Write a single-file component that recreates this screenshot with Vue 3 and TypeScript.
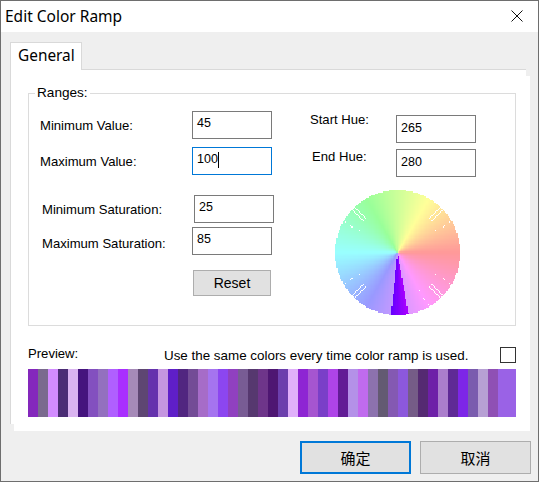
<script setup lang="ts">
import { onMounted, ref } from 'vue'

const stripes: string[] = [
  '#8428bc', '#7a6a8e', '#d28cff', '#4b2d75', '#dab4f0', '#45147e', '#8350bf', '#9370bf',
  '#b05fff', '#a92fff', '#a68ab8', '#5e4672', '#6532ad', '#c596e0', '#5f1fc8', '#512680',
  '#734c96', '#a66cc8', '#a574ef', '#8c46f0', '#9040c0', '#785c94', '#56386f', '#6e358a',
  '#4e1672', '#6c3fad', '#e0b0fa', '#8e25d3', '#a655d0', '#7a3fc8', '#ae44e8', '#621c96',
  '#b491e8', '#c06bee', '#8c72ae', '#635a72', '#8459b2', '#8c58dc', '#755c87', '#552a72',
  '#6e20a8', '#ab7ecc', '#5f2a96', '#7d26e8', '#7a5cae', '#b7a0d4', '#8f50b4', '#9a62e6',
]

const wheel = ref<HTMLCanvasElement | null>(null)

function hsv(h: number, s: number, v: number): [number, number, number] {
  const c = v * s
  const x = c * (1 - Math.abs(((h / 60) % 2) - 1))
  const m = v - c
  const t = Math.floor(h / 60) % 6
  const rgb = [
    [c, x, 0], [x, c, 0], [0, c, x], [0, x, c], [x, 0, c], [c, 0, x],
  ][t]
  return [(rgb[0] + m) * 255, (rgb[1] + m) * 255, (rgb[2] + m) * 255]
}

onMounted(() => {
  const cv = wheel.value
  if (!cv) return
  const ctx = cv.getContext('2d')
  if (!ctx) return
  const size = 100
  const img = ctx.createImageData(size, size)
  for (let y = 0; y < size; y++) {
    for (let x = 0; x < size; x++) {
      const dx = x + 0.5 - 50
      const dy = y + 0.5 - 50
      if (dx * dx + dy * dy > 2500) continue
      let hue = (Math.atan2(-dy, dx) * 180) / Math.PI
      if (hue < 0) hue += 360
      const inRange = hue >= 264 && hue <= 280
      const [r, g, b] = inRange ? hsv(hue, 1, 1) : hsv(hue, 0.4, 1)
      const i = (y * size + x) * 4
      img.data[i] = r
      img.data[i + 1] = g
      img.data[i + 2] = b
      img.data[i + 3] = 255
    }
  }
  ctx.putImageData(img, 0, 0)

  ctx.fillStyle = '#fff'
  const dot = (x: number, y: number) => ctx.fillRect(50 + x, 50 + y, 1, 1)
  for (const [sx, sy] of [[-1, -1], [1, -1], [-1, 1], [1, 1]]) {
    const ox = sx < 0 ? -1 : 0
    const oy = sy < 0 ? -1 : 0
    for (let i = 0; i < 10; i++) {
      dot(ox + sx * (36 - i), oy + sy * (34 - i))
      dot(ox + sx * (34 - i), oy + sy * (36 - i))
    }
    for (const [a, b] of [[41, 24], [37, 21], [36, 20], [30, 17]]) {
      dot(ox + sx * a, oy + sy * b)
      if (sx > 0 && sy > 0) dot(ox + sx * b, oy + sy * a)
    }
  }
})
</script>

<template>
  <div class="window">
    <header class="titlebar">
      <span class="title">Edit Color Ramp</span>
      <svg class="close" width="12" height="12" viewBox="0 0 12 12" aria-label="Close">
        <path d="M0.5 0.5L11.5 11.5M11.5 0.5L0.5 11.5" stroke="#111" stroke-width="1" fill="none" />
      </svg>
    </header>

    <div class="tabs"><div class="tab">General</div></div>

    <section class="pane">
      <div class="group">
        <span class="legend">Ranges:</span>

        <div class="left">
          <div class="row">
            <span class="label">Minimum Value:</span>
            <div class="field">45</div>
          </div>
          <div class="row row-2">
            <span class="label">Maximum Value:</span>
            <div class="field focused">100<i class="caret"></i></div>
          </div>
          <div class="row row-3">
            <span class="label sat">Minimum Saturation:</span>
            <div class="field">25</div>
          </div>
          <div class="row row-4">
            <span class="label sat2">Maximum Saturation:</span>
            <div class="field">85</div>
          </div>
          <button class="reset" type="button">Reset</button>
        </div>

        <div class="right">
          <div class="hue-row">
            <span class="hue-label start">Start Hue:</span>
            <div class="field hue">265</div>
          </div>
          <div class="hue-row second">
            <span class="hue-label end">End Hue:</span>
            <div class="field hue">280</div>
          </div>
          <canvas ref="wheel" class="wheel" width="100" height="100"></canvas>
        </div>
      </div>

      <div class="preview-head">
        <span class="preview-label">Preview:</span>
        <span class="same">Use the same colors every time color ramp is used.</span>
        <span class="check"></span>
      </div>

      <div class="strip">
        <span
          v-for="(c, i) in stripes"
          :key="i"
          class="stripe"
          :style="{ background: c }"
        ></span>
      </div>
    </section>

    <footer class="footer">
      <button class="btn primary" type="button">确定</button>
      <button class="btn" type="button">取消</button>
    </footer>
  </div>
</template>

<style scoped>
.window {
  box-sizing: border-box;
  width: 539px;
  height: 482px;
  border: 1px solid #6e6e6e;
  background: #efefef;
  font-family: "Liberation Sans", Arial, sans-serif;
  font-size: 13.1px;
  color: #000;
  overflow: hidden;
}
.titlebar {
  height: 31px;
  background: #fff;
  display: flex;
  align-items: center;
  justify-content: space-between;
  padding: 0 15px 1px 4px;
  box-sizing: border-box;
}
.title {
  font-family: "Noto Sans", sans-serif;
  font-size: 15.5px;
  color: #000;
}
.tabs {
  padding: 10px 0 0 9px;
  height: 37px;
  box-sizing: border-box;
  display: flex;
  position: relative;
  z-index: 1;
}
.tab {
  box-sizing: border-box;
  width: 72px;
  height: 28px;
  background: #fff;
  border: 1px solid #d9d9d9;
  border-bottom: 0;
  font-family: "Noto Sans", sans-serif;
  font-size: 15.4px;
  line-height: 25px;
  padding-left: 7px;
}
.pane {
  box-sizing: border-box;
  width: 516px;
  height: 355px;
  margin-left: 9px;
  background: #fff;
  border-top: 1px solid #d9d9d9;
  border-left: 1px solid #d9d9d9;
  box-shadow: 4px 7px 0 #fff;
  padding: 23px 0 0 17px;
  position: relative;
}
.group {
  position: relative;
  box-sizing: border-box;
  width: 488px;
  height: 233px;
  border: 1px solid #dcdcdc;
  display: flex;
}
.legend {
  position: absolute;
  left: 6px;
  top: -9px;
  background: #fff;
  padding: 0 2px;
  line-height: 16px;
  font-size: 13.6px;
}
.left {
  width: 281px;
  padding: 17px 0 0 11px;
  box-sizing: border-box;
}
.row {
  display: flex;
  height: 28px;
}
.row-2 { margin-top: 8px; }
.row-3 { margin-top: 20px; }
.row-4 { margin-top: 4px; }
.label {
  width: 152px;
  line-height: 30px;
}
.label.sat {
  margin-left: 2px;
}
.label.sat2 {
  margin-left: 2px;
  width: 150px;
  line-height: 34px;
}
.field {
  box-sizing: border-box;
  width: 80px;
  height: 28px;
  border: 1px solid #7a7a7a;
  padding: 3px 0 0 4px;
  line-height: 17px;
  font-size: 12.5px;
  background: #fff;
  display: flex;
  align-items: flex-start;
}
.field.focused {
  border-color: #0078d7;
}
.caret {
  display: inline-block;
  width: 1px;
  height: 16px;
  background: #000;
  margin: 1px 0 0 0;
}
.reset {
  display: block;
  box-sizing: border-box;
  width: 78px;
  height: 26px;
  margin: 15px 0 0 153px;
  background: #e1e1e1;
  border: 1px solid #adadad;
  font: inherit;
  font-size: 14px;
  color: #000;
  padding: 0;
}
.right {
  padding: 21px 0 0 0;
  display: flex;
  flex-direction: column;
}
.hue-row {
  display: flex;
  height: 28px;
}
.hue-row.second {
  margin-top: 6px;
}
.hue-label {
  width: 86px;
  line-height: 16px;
}
.hue-label.start {
  margin-top: -3px;
}
.hue-label.end {
  margin-left: 2px;
  width: 84px;
}
.field.hue {
  padding-top: 4px;
}
.wheel {
  display: block;
  width: 125px;
  height: 125px;
  margin: 13px 0 0 25px;
  image-rendering: pixelated;
}
.preview-head {
  display: flex;
  align-items: flex-start;
  width: 488px;
  height: 43px;
  box-sizing: border-box;
  padding-top: 21px;
}
.preview-label {
  width: 136px;
  line-height: 14px;
}
.same {
  width: 336px;
  line-height: 16px;
  font-size: 13.4px;
  margin-top: 1px;
}
.check {
  box-sizing: border-box;
  width: 16px;
  height: 16px;
  border: 1px solid #333;
  background: #fff;
}
.strip {
  display: flex;
  width: 488px;
  height: 48px;
}
.stripe {
  width: 10px;
  flex: none;
}
.stripe:last-child {
  width: 18px;
}
.footer {
  display: flex;
  justify-content: flex-end;
  gap: 9px;
  padding: 17px 7px 0 0;
}
.btn {
  box-sizing: border-box;
  width: 111px;
  height: 33px;
  background: #e1e1e1;
  border: 1px solid #adadad;
  font-family: "Noto Sans CJK SC", sans-serif;
  font-size: 15px;
  color: #000;
  padding: 0;
}
.btn.primary {
  border: 2px solid #0078d7;
}
</style>
